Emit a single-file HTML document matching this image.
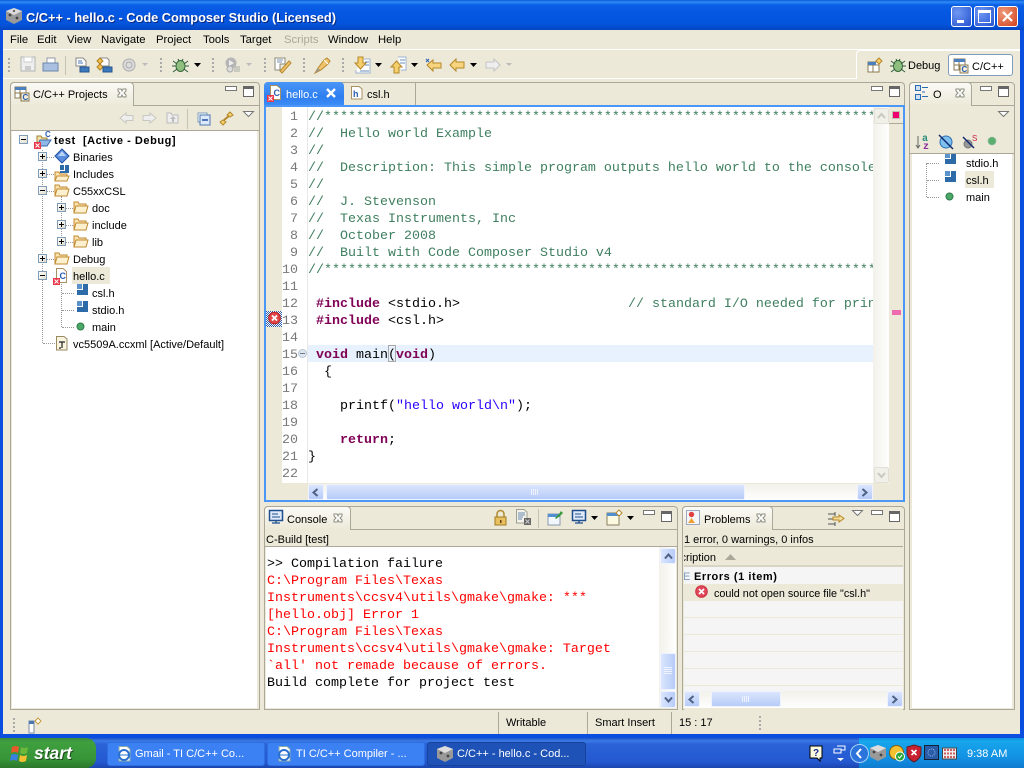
<!DOCTYPE html>
<html><head><meta charset="utf-8"><style>
html,body{margin:0;padding:0;width:1024px;height:768px;overflow:hidden;background:#ece9d8;font-family:"Liberation Sans",sans-serif;font-size:11px;color:#000}
.a{position:absolute;white-space:pre;margin-top:1px}
.b{position:absolute;box-sizing:border-box}
svg{position:absolute;overflow:visible}
.panel{position:absolute;box-sizing:border-box;border:1px solid #aca899;border-radius:4px 4px 0 0;background:#ece9d8}
.tab{position:absolute;box-sizing:border-box;background:#f4f2e8;border:1px solid #aca899;border-bottom:0;border-radius:4px 4px 0 0}
.m{position:absolute;top:0;height:20px;line-height:20px;font-size:11.3px}
.c{position:absolute;left:308px;font:13.33px/17px "Liberation Mono",monospace;white-space:pre;color:#000;margin-top:1px}
.g{color:#3f7f5f}.k{color:#7f0055;font-weight:bold}.s{color:#2a00ff}
.ln{position:absolute;left:282px;width:16px;text-align:right;font:13.33px/17px "Liberation Mono",monospace;color:#787878;margin-top:1px}
.con{position:absolute;left:267px;font:13.33px/17px "Liberation Mono",monospace;white-space:pre;margin-top:1px}
.r{color:#f00}
.min{position:absolute;width:10px;height:3px;border:1px solid #777;background:#fff}
.max{position:absolute;width:11px;height:11px;box-sizing:border-box;border:1px solid #666;border-top:3px solid #666;background:#fff}
.sb{position:absolute;box-sizing:border-box;background:linear-gradient(#dbe6fd,#b6cbf8);border:1px solid #eef3ff;border-radius:2px}
.sbv{position:absolute;box-sizing:border-box;background:linear-gradient(90deg,#dbe6fd,#b6cbf8);border:1px solid #eef3ff;border-radius:2px}
.pm{position:absolute;width:9px;height:9px;box-sizing:border-box;border:1px solid #7f9db9;background:linear-gradient(135deg,#fff,#e0dccb)}
.dl{position:absolute;border-left:1px dotted #999}
.dh{position:absolute;border-top:1px dotted #999}
.tb{position:absolute;top:742px;height:24px;box-sizing:border-box;border-radius:3px;color:#fff;line-height:23px;font-size:11px}
.grip{position:absolute;width:2px;border-left:2px dotted #aaa}
</style></head><body>

<!-- title bar -->
<div class="b" style="left:0;top:0;width:1024px;height:30px;background:linear-gradient(#0a5bd6 0,#2e8bf7 2px,#0a5fe6 5px,#0558e3 12px,#0454dc 24px,#0345c2 30px)"></div>
<div class="b" style="left:0;top:30px;width:3px;height:708px;background:#0a4ee0"></div>
<div class="b" style="left:1020px;top:30px;width:4px;height:708px;background:#0a4ee0"></div>
<div class="b" style="left:0;top:734px;width:1024px;height:4px;background:#0a4ee0"></div>
<svg style="left:6px;top:8px" width="18" height="16"><path d="M8 0L16 3V12L8 16L0 12V3Z" fill="#9a9a9a"/><path d="M8 0L16 3L8 7L0 3Z" fill="#dcdcdc"/><circle cx="4" cy="7" r="1.4" fill="#444"/><circle cx="11" cy="10" r="1.4" fill="#444"/><circle cx="8" cy="3" r="1.2" fill="#666"/></svg>
<div class="a" style="left:26px;top:9px;color:#fff;font-weight:bold;font-size:12.8px;text-shadow:1px 1px #0a2a80">C/C++ - hello.c - Code Composer Studio (Licensed)</div>
<!-- window buttons -->
<div class="b" style="left:951px;top:6px;width:21px;height:21px;border:1px solid #fff;border-radius:3px;background:radial-gradient(circle at 30% 30%,#6f98f2,#2452cf)"><div class="b" style="left:5px;top:13px;width:7px;height:3px;background:#fff"></div></div>
<div class="b" style="left:974px;top:6px;width:21px;height:21px;border:1px solid #fff;border-radius:3px;background:radial-gradient(circle at 30% 30%,#6f98f2,#2452cf)"><div class="b" style="left:3px;top:3px;width:13px;height:13px;border:1px solid #fff;border-top:3px solid #fff"></div></div>
<div class="b" style="left:997px;top:6px;width:21px;height:21px;border:1px solid #fff;border-radius:3px;background:radial-gradient(circle at 30% 30%,#ee9a7c,#d2421c)"><svg style="left:4px;top:4px" width="11" height="11"><path d="M1 1L10 10M10 1L1 10" stroke="#fff" stroke-width="2.2"/></svg></div>

<!-- menu -->
<div class="b" style="left:3px;top:30px;width:1017px;height:20px;background:#ece9d8">
<span class="m" style="left:7px">File</span><span class="m" style="left:34px">Edit</span><span class="m" style="left:64px">View</span><span class="m" style="left:98px">Navigate</span><span class="m" style="left:153px">Project</span><span class="m" style="left:200px">Tools</span><span class="m" style="left:237px">Target</span><span class="m" style="left:281px;color:#aca899">Scripts</span><span class="m" style="left:325px">Window</span><span class="m" style="left:375px">Help</span>
</div>
<div class="b" style="left:3px;top:49px;width:1017px;height:1px;background:#fff"></div>

<!-- toolbar -->
<div class="grip" style="left:8px;top:58px;height:14px"></div>
<svg style="left:20px;top:56px" width="16" height="16"><path d="M1 1H15V15H1Z" fill="#eee" stroke="#b5b5b5"/><path d="M4 1H12V6H4Z" fill="#fff" stroke="#ccc"/><path d="M5 10H11V15H5Z" fill="#ccc"/></svg>
<svg style="left:42px;top:57px" width="18" height="16"><path d="M5 1H13V6H5Z" fill="#fff" stroke="#99a"/><path d="M1 6H16V14H1Z" fill="#a9c0e0" stroke="#6b86ad"/></svg>
<div class="b" style="left:65px;top:56px;width:1px;height:19px;background:#c5c2b2"></div>
<svg style="left:74px;top:57px" width="17" height="17"><path d="M2 1H9L12 4V9H2Z" fill="#fff" stroke="#888"/><path d="M4 4H8M4 6H9" stroke="#4a78b4"/><path d="M6 10H15V15H6Z" fill="#3b79bd" stroke="#27558f"/></svg>
<svg style="left:96px;top:57px" width="17" height="17"><path d="M4 1H11L13 3V9H4Z" fill="#fff" stroke="#888"/><path d="M1 4L4 1L7 4L4 7Z" fill="#f0c050" stroke="#b08020"/><path d="M1 10L4 7L7 10L4 13Z" fill="#f0c050" stroke="#b08020"/><path d="M7 10H16V15H7Z" fill="#3b79bd" stroke="#27558f"/></svg>
<svg style="left:122px;top:58px" width="15" height="15"><circle cx="7" cy="7" r="6" fill="#ddd" stroke="#aaa"/><circle cx="7" cy="7" r="3" fill="none" stroke="#aaa"/></svg>
<svg style="left:142px;top:63px" width="6" height="3"><path d="M0 0H6L3 3Z" fill="#bbb"/></svg>
<div class="grip" style="left:160px;top:58px;height:14px"></div>
<svg style="left:172px;top:57px" width="17" height="16"><ellipse cx="8.500" cy="9" rx="4.500" ry="5.500" fill="#8fbf7f" stroke="#36683a"/><path d="M1 4L5 7M16 4L12 7M0 9H4M17 9H13M1 15L5 12M16 15L12 12M6 2L7 4M11 2L10 4" stroke="#2d5a3a"/></svg>
<svg style="left:194px;top:63px" width="7" height="4"><path d="M0 0H7L3.500 4Z" fill="#000"/></svg>
<div class="grip" style="left:212px;top:58px;height:14px"></div>
<svg style="left:224px;top:57px" width="17" height="16"><circle cx="7" cy="6" r="5.500" fill="#b5b5b5"/><path d="M5 3L10 6L5 9Z" fill="#eee"/><circle cx="6" cy="12" r="3" fill="#ddd" stroke="#aaa"/><path d="M10 10H16M10 12H16M10 14H16" stroke="#aaa"/></svg>
<svg style="left:246px;top:63px" width="6" height="3"><path d="M0 0H6L3 3Z" fill="#bbb"/></svg>
<div class="grip" style="left:264px;top:58px;height:14px"></div>
<svg style="left:274px;top:57px" width="18" height="17"><path d="M1 1H11V7H6V13H1Z" fill="#fff" stroke="#8a8a7a"/><path d="M3 3H9M3 5H8" stroke="#7a90b0"/><path d="M6 14L15 4L17 6L8 16Z" fill="#efc26c" stroke="#b98a2e"/></svg>
<div class="grip" style="left:303px;top:58px;height:14px"></div>
<svg style="left:314px;top:57px" width="17" height="17"><path d="M1 16L4 11L10 3L13 1L16 4L14 7L7 13L3 15Z" fill="#efc26c" stroke="#b98a2e"/><path d="M1 16L4 11L6 13Z" fill="#999"/><path d="M10 3L14 7" stroke="#fff"/></svg>
<div class="grip" style="left:342px;top:58px;height:14px"></div>
<svg style="left:354px;top:56px" width="17" height="18"><path d="M10 3H16V17H2V14" fill="#fff" stroke="#9db4d2"/><path d="M11 6H15M11 9H15M6 15H15" stroke="#6a8cb8"/><path d="M4 1H9V7H12L6.500 13L1 7H4Z" fill="#f5cf6b" stroke="#b5862a"/></svg>
<svg style="left:375px;top:63px" width="7" height="4"><path d="M0 0H7L3.500 4Z" fill="#000"/></svg>
<svg style="left:390px;top:56px" width="17" height="18"><path d="M8 1H16V14H11" fill="#fff" stroke="#9db4d2"/><path d="M10 4H15M10 7H15" stroke="#6a8cb8"/><path d="M4 17H9V11H12L6.500 5L1 11H4Z" fill="#f5cf6b" stroke="#b5862a"/></svg>
<svg style="left:411px;top:63px" width="7" height="4"><path d="M0 0H7L3.500 4Z" fill="#000"/></svg>
<svg style="left:425px;top:58px" width="17" height="14"><path d="M2 7L8 2V5H16V10H8V13Z" fill="#f7d57e" stroke="#b5862a"/><path d="M1 1L4 4M4 1L1 4" stroke="#2a5db0"/></svg>
<svg style="left:449px;top:58px" width="16" height="14"><path d="M1 7L7 1V4H15V10H7V13Z" fill="#f7d57e" stroke="#b5862a"/></svg>
<svg style="left:470px;top:63px" width="7" height="4"><path d="M0 0H7L3.500 4Z" fill="#000"/></svg>
<svg style="left:485px;top:58px" width="16" height="14"><path d="M15 7L9 1V4H1V10H9V13Z" fill="#eee" stroke="#c4c4c4"/></svg>
<svg style="left:506px;top:63px" width="6" height="3"><path d="M0 0H6L3 3Z" fill="#bbb"/></svg>

<!-- perspective bar -->
<div class="b" style="left:3px;top:78px;width:856px;height:1px;background:#fff"></div>
<div class="b" style="left:856px;top:50px;width:164px;height:29px;border-left:1px solid #fff;border-top:1px solid #fff;border-radius:4px 0 0 0;background:#ece9d8"></div>
<svg style="left:867px;top:58px" width="16" height="15"><path d="M1 4H12V14H1Z" fill="#fff" stroke="#8a7a50"/><path d="M1 7H12M6 7V14" stroke="#8a7a50"/><path d="M1 4H9V7H1Z" fill="#4a80c0"/><path d="M12 0L15 3L12 6L9 3Z" fill="#f5cf6b" stroke="#b5862a"/></svg>
<svg style="left:890px;top:57px" width="16" height="16"><ellipse cx="8" cy="9" rx="4.500" ry="5.500" fill="#8fbf7f" stroke="#36683a"/><path d="M1 4L5 7M15 4L11 7M0 9H4M16 9H12M1 15L5 12M15 15L11 12M6 2L7 4M10 2L9 4" stroke="#2d5a3a"/></svg>
<div class="a" style="left:908px;top:58px;line-height:14px">Debug</div>
<div class="b" style="left:948px;top:54px;width:65px;height:22px;background:#fff;border:1px solid #7f9db9;border-radius:3px"></div>
<svg style="left:953px;top:58px" width="16" height="16"><path d="M1 1H12V12H1Z" fill="#fff" stroke="#8a7a50"/><path d="M1 1H12V4H1Z" fill="#4a80c0"/><path d="M1 7H12M6 4V12" stroke="#8a7a50"/><path d="M7 7H15V15H7Z" fill="#f0ecd8" stroke="#8a7a50"/><text x="8.500" y="14" font-family="Liberation Sans" font-size="8" font-weight="bold" fill="#2a5db0">C</text></svg>
<div class="a" style="left:972px;top:59px;line-height:14px">C/C++</div>

<!-- LEFT: projects -->
<div class="panel" style="left:10px;top:82px;width:250px;height:628px"></div>
<div class="tab" style="left:10px;top:82px;width:124px;height:24px;background:linear-gradient(#fbfaf6,#ece9d8)"></div>
<div class="b" style="left:134px;top:105px;width:126px;height:1px;background:#aca899"></div>
<svg style="left:14px;top:86px" width="16" height="16"><path d="M1 1H12V12H1Z" fill="#fff" stroke="#8a7a50"/><path d="M1 1H12V4H1Z" fill="#4a80c0"/><path d="M1 7H12M6 4V12" stroke="#8a7a50"/><path d="M7 7H15V15H7Z" fill="#f0ecd8" stroke="#8a7a50"/><text x="8.500" y="14" font-family="Liberation Sans" font-size="8" font-weight="bold" fill="#2a5db0">C</text></svg>
<div class="a" style="left:33px;top:87px;line-height:14px">C/C++ Projects</div>
<svg style="left:117px;top:88px" width="10" height="10"><path d="M1 1L4 1L5 3L6 1L9 1L9 3L7 5L9 7L9 9L6 9L5 7L4 9L1 9L1 7L3 5L1 3Z" fill="#fff" stroke="#8d8d80"/></svg>
<div class="min" style="left:225px;top:86px"></div><div class="max" style="left:243px;top:86px"></div>
<svg style="left:119px;top:112px" width="15" height="12"><path d="M1 6L7 1V3.500H14V8.500H7V11Z" fill="#eee" stroke="#c8c8c0"/></svg>
<svg style="left:142px;top:112px" width="15" height="12"><path d="M14 6L8 1V3.500H1V8.500H8V11Z" fill="#eee" stroke="#c8c8c0"/></svg>
<svg style="left:165px;top:110px" width="15" height="15"><path d="M2 3H6L7 5H13V13H2Z" fill="#eee" stroke="#bbb"/><path d="M5 9L8 6L11 9H9V12H7V9Z" fill="#bbb"/></svg>
<div class="b" style="left:187px;top:109px;width:1px;height:20px;background:#c5c2b2"></div>
<svg style="left:197px;top:112px" width="14" height="14"><path d="M1 1H10V10H1Z" fill="#fff" stroke="#7f9db9"/><path d="M3 3H13V13H3Z" fill="#dde8f8" stroke="#4a78b4"/><path d="M5 8H11" stroke="#1f4f9f" stroke-width="1.500"/></svg>
<svg style="left:219px;top:111px" width="15" height="15"><path d="M1 11L4 9L7 11L4 14ZM8 4L11 1L14 4L11 6Z" fill="#f5cf6b" stroke="#b5862a"/><path d="M5 9L10 5" stroke="#b5862a" stroke-width="2"/></svg>
<svg style="left:243px;top:111px" width="11" height="6"><path d="M0.500 0.500H10.500L5.500 5.500Z" fill="#fff" stroke="#777"/></svg>
<div class="b" style="left:11px;top:130px;width:248px;height:1px;background:#aca899"></div>
<div class="b" style="left:12px;top:131px;width:245px;height:577px;background:#fff"></div>

<!-- tree lines -->
<div class="dl" style="left:42px;top:150px;height:193px"></div>
<div class="dl" style="left:61px;top:196px;height:46px"></div>
<div class="dl" style="left:61px;top:282px;height:45px"></div>
<div class="dh" style="left:43px;top:343px;width:12px"></div>
<div class="dh" style="left:62px;top:293px;width:12px"></div>
<div class="dh" style="left:62px;top:310px;width:12px"></div>
<div class="dh" style="left:62px;top:327px;width:12px"></div>
<div class="dh" style="left:47px;top:157px;width:7px"></div>
<div class="dh" style="left:47px;top:174px;width:7px"></div>
<div class="dh" style="left:47px;top:191px;width:7px"></div>
<div class="dh" style="left:47px;top:259px;width:7px"></div>
<div class="dh" style="left:66px;top:208px;width:7px"></div>
<div class="dh" style="left:66px;top:225px;width:7px"></div>
<div class="dh" style="left:66px;top:242px;width:7px"></div>
<div class="pm" style="left:19px;top:135px"></div><div class="b" style="left:21px;top:139px;width:5px;height:1px;background:#000"></div>
<div class="pm" style="left:38px;top:152px"></div><div class="b" style="left:40px;top:156px;width:5px;height:1px;background:#000"></div><div class="b" style="left:42px;top:154px;width:1px;height:5px;background:#000"></div>
<div class="pm" style="left:38px;top:169px"></div><div class="b" style="left:40px;top:173px;width:5px;height:1px;background:#000"></div><div class="b" style="left:42px;top:171px;width:1px;height:5px;background:#000"></div>
<div class="pm" style="left:38px;top:186px"></div><div class="b" style="left:40px;top:190px;width:5px;height:1px;background:#000"></div>
<div class="pm" style="left:57px;top:203px"></div><div class="b" style="left:59px;top:207px;width:5px;height:1px;background:#000"></div><div class="b" style="left:61px;top:205px;width:1px;height:5px;background:#000"></div>
<div class="pm" style="left:57px;top:220px"></div><div class="b" style="left:59px;top:224px;width:5px;height:1px;background:#000"></div><div class="b" style="left:61px;top:222px;width:1px;height:5px;background:#000"></div>
<div class="pm" style="left:57px;top:237px"></div><div class="b" style="left:59px;top:241px;width:5px;height:1px;background:#000"></div><div class="b" style="left:61px;top:239px;width:1px;height:5px;background:#000"></div>
<div class="pm" style="left:38px;top:254px"></div><div class="b" style="left:40px;top:258px;width:5px;height:1px;background:#000"></div><div class="b" style="left:42px;top:256px;width:1px;height:5px;background:#000"></div>
<div class="pm" style="left:38px;top:271px"></div><div class="b" style="left:40px;top:275px;width:5px;height:1px;background:#000"></div>

<!-- tree icons -->
<svg style="left:34px;top:131px" width="17" height="18"><path d="M3 5H7L8 7H13V15H3Z" fill="#f5e2a8" stroke="#a08030"/><path d="M3 15L6 9H17L13 15Z" fill="#8fb8e8" stroke="#3a6aa8"/><rect x="0" y="11" width="7" height="7" fill="#e8384a"/><path d="M1.500 12.500L5.500 16.500M5.500 12.500L1.500 16.500" stroke="#fff"/><text x="11" y="6" font-family="Liberation Sans" font-size="8" font-weight="bold" fill="#2a5db0">C</text></svg>
<svg style="left:55px;top:149px" width="14" height="14"><path d="M7 0L14 7L7 14L0 7Z" fill="#5a8fe0" stroke="#1f4f9f"/><path d="M7 2L11 7H3Z" fill="#b8d2f8"/></svg>
<svg style="left:54px;top:165px" width="16" height="17"><path d="M6 0H10V5H6ZM11 0H15V8H6V6H11Z" fill="#2d6aa8"/><path d="M1 7H5L6 9H13V16H1Z" fill="#fbe3b0" stroke="#c08a30"/><path d="M1 16L3 11H15L13 16Z" fill="#fdf0cf" stroke="#c08a30"/></svg>
<svg style="left:54px;top:184px" width="16" height="13"><path d="M1 1H5L6 3H13V12H1Z" fill="#fbe3b0" stroke="#c08a30"/><path d="M1 12L3 5H15L13 12Z" fill="#fdf0cf" stroke="#c08a30"/></svg>
<svg style="left:73px;top:201px" width="16" height="13"><path d="M1 1H5L6 3H13V12H1Z" fill="#fbe3b0" stroke="#c08a30"/><path d="M1 12L3 5H15L13 12Z" fill="#fdf0cf" stroke="#c08a30"/></svg>
<svg style="left:73px;top:218px" width="16" height="13"><path d="M1 1H5L6 3H13V12H1Z" fill="#fbe3b0" stroke="#c08a30"/><path d="M1 12L3 5H15L13 12Z" fill="#fdf0cf" stroke="#c08a30"/></svg>
<svg style="left:73px;top:235px" width="16" height="13"><path d="M1 1H5L6 3H13V12H1Z" fill="#fbe3b0" stroke="#c08a30"/><path d="M1 12L3 5H15L13 12Z" fill="#fdf0cf" stroke="#c08a30"/></svg>
<svg style="left:54px;top:252px" width="16" height="13"><path d="M1 1H5L6 3H13V12H1Z" fill="#fbe3b0" stroke="#c08a30"/><path d="M1 12L3 5H15L13 12Z" fill="#fdf0cf" stroke="#c08a30"/></svg>
<svg style="left:53px;top:268px" width="15" height="17"><path d="M3.500 0.500H10L13.500 3.500V14.500H3.500Z" fill="#fff" stroke="#a89060"/><text x="6.500" y="11" font-family="Liberation Sans" font-size="9" font-weight="bold" fill="#2a5db0">C</text><rect x="0" y="10" width="7" height="7" fill="#e8384a"/><path d="M1.500 11.500L5.500 15.500M5.500 11.500L1.500 15.500" stroke="#fff"/></svg>
<svg style="left:77px;top:284px" width="11" height="11"><path d="M0 0H5V5H0Z" fill="#5a92cc"/><path d="M6 0H11V11H0V6H6Z" fill="#2d6aa8"/></svg>
<svg style="left:77px;top:301px" width="11" height="11"><path d="M0 0H5V5H0Z" fill="#5a92cc"/><path d="M6 0H11V11H0V6H6Z" fill="#2d6aa8"/></svg>
<svg style="left:76px;top:322px" width="9" height="9"><circle cx="4.500" cy="4.500" r="3.500" fill="#4ca866" stroke="#2d7a4a"/></svg>
<svg style="left:56px;top:336px" width="12" height="15"><path d="M0.500 0.500H8L11 3V14H0.500Z" fill="#f8f4e0" stroke="#9a8a60"/><path d="M3 6H9M6 6V12M3 12H5" stroke="#222" stroke-width="1.200"/></svg>

<!-- tree text -->
<div class="a" style="left:54px;top:133px;font-weight:bold;line-height:14px;letter-spacing:.55px">test  [Active - Debug]</div>
<div class="a" style="left:73px;top:150px;line-height:14px">Binaries</div>
<div class="a" style="left:73px;top:167px;line-height:14px">Includes</div>
<div class="a" style="left:73px;top:184px;line-height:14px">C55xxCSL</div>
<div class="a" style="left:92px;top:201px;line-height:14px">doc</div>
<div class="a" style="left:92px;top:218px;line-height:14px">include</div>
<div class="a" style="left:92px;top:235px;line-height:14px">lib</div>
<div class="a" style="left:73px;top:252px;line-height:14px">Debug</div>
<div class="b" style="left:72px;top:267px;width:38px;height:17px;background:#ece9d8"></div>
<div class="a" style="left:73px;top:269px;line-height:14px">hello.c</div>
<div class="a" style="left:92px;top:286px;line-height:14px">csl.h</div>
<div class="a" style="left:92px;top:303px;line-height:14px">stdio.h</div>
<div class="a" style="left:92px;top:320px;line-height:14px">main</div>
<div class="a" style="left:73px;top:337px;line-height:14px">vc5509A.ccxml [Active/Default]</div>

<!-- EDITOR -->
<div class="panel" style="left:264px;top:82px;width:641px;height:24px;border-bottom:0"></div>
<div class="b" style="left:264px;top:82px;width:80px;height:25px;background:linear-gradient(#4a96f8,#2d7ef0 60%,#3f8ff8);border-radius:4px 4px 0 0"></div>
<div class="b" style="left:344px;top:82px;width:72px;height:24px;background:#ece9d8;border-right:1px solid #aca899;border-top:1px solid #aca899"></div>
<svg style="left:267px;top:85px" width="15" height="17"><path d="M3.500 0.500H10L13.500 3.500V14.500H3.500Z" fill="#fff" stroke="#a89060"/><text x="6.500" y="11" font-family="Liberation Sans" font-size="9" font-weight="bold" fill="#2a5db0">C</text><rect x="0" y="10" width="7" height="7" fill="#e8384a"/><path d="M1.500 11.500L5.500 15.500M5.500 11.500L1.500 15.500" stroke="#fff"/></svg>
<div class="a" style="left:286px;top:87px;color:#fff;line-height:14px">hello.c</div>
<svg style="left:326px;top:88px" width="10" height="10"><path d="M1 1L9 9M9 1L1 9" stroke="#fff" stroke-width="2.400"/></svg>
<svg style="left:351px;top:86px" width="12" height="14"><path d="M0.500 0.500H8L11 3V13H0.500Z" fill="#fff" stroke="#a89060"/><text x="2" y="11" font-family="Liberation Sans" font-size="9" font-weight="bold" fill="#2a5db0">h</text></svg>
<div class="a" style="left:367px;top:87px;line-height:14px">csl.h</div>
<div class="min" style="left:871px;top:86px"></div><div class="max" style="left:889px;top:86px"></div>

<div class="b" style="left:264px;top:105px;width:641px;height:397px;border:2px solid #4b97f8;background:#fff"></div>
<div class="b" style="left:266px;top:107px;width:16px;height:376px;background:#ece9d8"></div>
<div class="b" style="left:307px;top:107px;width:1px;height:376px;background:#e8e8e8"></div>
<div class="b" style="left:266px;top:483px;width:637px;height:17px;background:#ece9d8"></div>
<div class="b" style="left:308px;top:345px;width:565px;height:17px;background:#e8f2fe"></div>
<div class="b" style="left:388px;top:345px;width:8px;height:17px;border:1px solid #aaa"></div>
<!-- overview ruler -->
<div class="b" style="left:889px;top:107px;width:14px;height:376px;background:#ece9d8"></div>
<div class="b" style="left:889px;top:123px;width:14px;height:1px;background:#aca899"></div>
<div class="b" style="left:892px;top:111px;width:8px;height:8px;background:#f0006e;border:1px solid #c0c0b0"></div>
<div class="b" style="left:892px;top:310px;width:9px;height:5px;background:#f06ab0"></div>
<!-- v scroll -->
<div class="b" style="left:873px;top:107px;width:16px;height:376px;background:linear-gradient(90deg,#f2f1ea,#fefefe)"></div>
<div class="b" style="left:874px;top:108px;width:15px;height:16px;background:#f0efe8;border:1px solid #e0e0d8;border-radius:2px"></div>
<svg style="left:877px;top:113px" width="9" height="6"><path d="M1 5L4.500 1L8 5" fill="none" stroke="#c8c8c0" stroke-width="2"/></svg>
<div class="b" style="left:874px;top:467px;width:15px;height:16px;background:#f0efe8;border:1px solid #e0e0d8;border-radius:2px"></div>
<svg style="left:877px;top:472px" width="9" height="6"><path d="M1 1L4.500 5L8 1" fill="none" stroke="#c8c8c0" stroke-width="2"/></svg>
<!-- h scroll -->
<div class="b" style="left:308px;top:484px;width:565px;height:16px;background:linear-gradient(#f2f1ea,#fefefe)"></div>
<div class="sb" style="left:308px;top:484px;width:16px;height:16px"></div>
<svg style="left:312px;top:488px" width="7" height="9"><path d="M5.500 1L1.500 4.500L5.500 8" fill="none" stroke="#4d6185" stroke-width="2"/></svg>
<div class="sb" style="left:326px;top:484px;width:419px;height:16px"></div>
<svg style="left:531px;top:489px" width="8" height="6"><path d="M0.500 0V6M2.500 0V6M4.500 0V6M6.500 0V6" stroke="#eef3ff"/></svg>
<div class="sb" style="left:857px;top:484px;width:16px;height:16px"></div>
<svg style="left:861px;top:488px" width="7" height="9"><path d="M1.500 1L5.500 4.500L1.500 8" fill="none" stroke="#4d6185" stroke-width="2"/></svg>

<!-- line numbers -->
<div class="ln" style="top:108px">1</div><div class="ln" style="top:125px">2</div><div class="ln" style="top:142px">3</div><div class="ln" style="top:159px">4</div><div class="ln" style="top:176px">5</div><div class="ln" style="top:193px">6</div><div class="ln" style="top:210px">7</div><div class="ln" style="top:227px">8</div><div class="ln" style="top:244px">9</div><div class="ln" style="top:261px">10</div><div class="ln" style="top:278px">11</div><div class="ln" style="top:295px">12</div><div class="ln" style="top:312px">13</div><div class="ln" style="top:329px">14</div><div class="ln" style="top:346px">15</div><div class="ln" style="top:363px">16</div><div class="ln" style="top:380px">17</div><div class="ln" style="top:397px">18</div><div class="ln" style="top:414px">19</div><div class="ln" style="top:431px">20</div><div class="ln" style="top:448px">21</div><div class="ln" style="top:465px">22</div>
<svg style="left:298px;top:349px" width="9" height="9"><circle cx="4.500" cy="4.500" r="4" fill="#dfe6ee" stroke="#b8c8d8"/><path d="M2 4.500H7" stroke="#6a7a8a"/></svg>
<svg style="left:266px;top:311px" width="16" height="16"><defs><pattern id="ht" width="2" height="2" patternUnits="userSpaceOnUse"><rect width="2" height="2" fill="#fff"/><rect width="1" height="1" fill="#2a5ca8"/><rect x="1" y="1" width="1" height="1" fill="#2a5ca8"/></pattern></defs><rect width="16" height="16" fill="url(#ht)"/><circle cx="8.500" cy="7" r="5.800" fill="#e04848" stroke="#c02020"/><path d="M6 4.500L11 9.500M11 4.500L6 9.500" stroke="#fff" stroke-width="1.800"/></svg>

<!-- code -->
<div style="position:absolute;left:308px;top:107px;width:565px;height:376px;overflow:hidden">
<div class="c g" style="left:0;top:1px">//*********************************************************************************</div>
<div class="c g" style="left:0;top:18px">//  Hello world Example</div>
<div class="c g" style="left:0;top:35px">//</div>
<div class="c g" style="left:0;top:52px">//  Description: This simple program outputs hello world to the console</div>
<div class="c g" style="left:0;top:69px">//</div>
<div class="c g" style="left:0;top:86px">//  J. Stevenson</div>
<div class="c g" style="left:0;top:103px">//  Texas Instruments, Inc</div>
<div class="c g" style="left:0;top:120px">//  October 2008</div>
<div class="c g" style="left:0;top:137px">//  Built with Code Composer Studio v4</div>
<div class="c g" style="left:0;top:154px">//*********************************************************************************</div>
<div class="c" style="left:0;top:188px"> <span class="k">#include</span> &lt;stdio.h&gt;                     <span class="g">// standard I/O needed for printf</span></div>
<div class="c" style="left:0;top:205px"> <span class="k">#include</span> &lt;csl.h&gt;</div>
<div class="c" style="left:0;top:239px"> <span class="k">void</span> main(<span class="k">void</span>)</div>
<div class="c" style="left:0;top:256px">  {</div>
<div class="c" style="left:0;top:290px">    printf(<span class="s">"hello world\n"</span>);</div>
<div class="c" style="left:0;top:324px">    <span class="k">return</span>;</div>
<div class="c" style="left:0;top:341px">}</div>
</div>

<!-- OUTLINE -->
<div class="panel" style="left:909px;top:82px;width:106px;height:628px"></div>
<div class="tab" style="left:909px;top:82px;width:63px;height:24px;background:linear-gradient(#fbfaf6,#ece9d8)"></div>
<div class="b" style="left:972px;top:105px;width:43px;height:1px;background:#aca899"></div>
<svg style="left:915px;top:85px" width="14" height="15"><path d="M0.500 0.500H5.500V5.500H0.500ZM0.500 9.500H5.500V14.500H0.500Z" fill="#cfe0f5" stroke="#2a6ab0"/><path d="M7 2.500H13M7 11.500H13M7 7H10" stroke="#2a6ab0"/></svg>
<div class="a" style="left:933px;top:87px;line-height:14px">O</div>
<svg style="left:955px;top:88px" width="10" height="10"><path d="M1 1L4 1L5 3L6 1L9 1L9 3L7 5L9 7L9 9L6 9L5 7L4 9L1 9L1 7L3 5L1 3Z" fill="#fff" stroke="#8d8d80"/></svg>
<div class="min" style="left:980px;top:86px"></div><div class="max" style="left:998px;top:86px"></div>
<svg style="left:998px;top:111px" width="11" height="6"><path d="M0.500 0.500H10.500L5.500 5.500Z" fill="#fff" stroke="#777"/></svg>
<svg style="left:915px;top:133px" width="18" height="17"><path d="M3 3V15M1 12L3 15L5 12" fill="none" stroke="#666"/><text x="7" y="8" font-family="Liberation Mono" font-size="10" font-weight="bold" fill="#2d8a7a">a</text><text x="8" y="16" font-family="Liberation Mono" font-size="10" font-weight="bold" fill="#8a2d9a">z</text></svg>
<svg style="left:938px;top:134px" width="16" height="16"><circle cx="8" cy="8" r="6" fill="#80c0f0" stroke="#2a70b0"/><path d="M1 1L15 15" stroke="#102a70" stroke-width="1.500"/></svg>
<svg style="left:962px;top:134px" width="16" height="16"><circle cx="6" cy="10" r="4" fill="#999" stroke="#777"/><path d="M1 3L12 14" stroke="#102a70" stroke-width="1.500"/><text x="10" y="7" font-family="Liberation Sans" font-size="8" fill="#d02040">S</text></svg>
<svg style="left:987px;top:136px" width="10" height="10"><circle cx="5" cy="5" r="3.800" fill="#5cae70" stroke="#7ab88a"/></svg>
<div class="b" style="left:910px;top:153px;width:104px;height:1px;background:#aca899"></div>
<div class="b" style="left:912px;top:154px;width:100px;height:554px;background:#fff"></div>
<div class="dl" style="left:926px;top:163px;height:34px"></div>
<div class="dh" style="left:927px;top:163px;width:12px"></div>
<div class="dh" style="left:927px;top:180px;width:12px"></div>
<div class="dh" style="left:927px;top:197px;width:12px"></div>
<svg style="left:945px;top:154px" width="11" height="10"><path d="M0 0H5V4H0Z" fill="#5a92cc"/><path d="M6 0H11V10H0V5H6Z" fill="#2d6aa8"/></svg>
<svg style="left:945px;top:171px" width="11" height="11"><path d="M0 0H5V5H0Z" fill="#5a92cc"/><path d="M6 0H11V11H0V6H6Z" fill="#2d6aa8"/></svg>
<svg style="left:945px;top:192px" width="9" height="9"><circle cx="4.500" cy="4.500" r="3.500" fill="#4ca866" stroke="#2d7a4a"/></svg>
<div class="b" style="left:965px;top:171px;width:29px;height:17px;background:#ece9d8"></div>
<div class="a" style="left:966px;top:156px;line-height:14px">stdio.h</div>
<div class="a" style="left:966px;top:173px;line-height:14px">csl.h</div>
<div class="a" style="left:966px;top:190px;line-height:14px">main</div>

<!-- CONSOLE -->
<div class="panel" style="left:264px;top:506px;width:414px;height:204px"></div>
<div class="tab" style="left:264px;top:506px;width:87px;height:24px;background:linear-gradient(#fbfaf6,#ece9d8)"></div>
<div class="b" style="left:351px;top:529px;width:327px;height:1px;background:#aca899"></div>
<svg style="left:269px;top:510px" width="14" height="14"><path d="M0.500 0.500H13.500V10.500H0.500Z" fill="#dfe9f8" stroke="#1f4f90" stroke-width="1.500"/><path d="M3 4H9M3 7H11" stroke="#1f4f90"/><path d="M3 13H11M7 11V13" stroke="#1f4f90" stroke-width="1.300"/></svg>
<div class="a" style="left:287px;top:512px;line-height:14px">Console</div>
<svg style="left:333px;top:513px" width="10" height="10"><path d="M1 1L4 1L5 3L6 1L9 1L9 3L7 5L9 7L9 9L6 9L5 7L4 9L1 9L1 7L3 5L1 3Z" fill="#fff" stroke="#8d8d80"/></svg>
<svg style="left:494px;top:510px" width="13" height="16"><path d="M3 7V4A3.500 3.500 0 0 1 10 4V7" fill="none" stroke="#b08a30" stroke-width="1.500"/><rect x="1" y="7" width="11" height="8" fill="#e8c060" stroke="#a07a20"/><rect x="6" y="10" width="1.500" height="3" fill="#604010"/></svg>
<svg style="left:516px;top:509px" width="16" height="17"><path d="M0.500 0.500H8L11 3V14H0.500Z" fill="#f2f2ea" stroke="#a0a090"/><path d="M2 4H9M2 6H9M2 8H7M2 10H6" stroke="#6a8ab0"/><path d="M8 9H15V16H8Z" fill="#666"/><path d="M9.500 10.500L13.500 14.500M13.500 10.500L9.500 14.500" stroke="#ccc"/></svg>
<div class="b" style="left:538px;top:509px;width:1px;height:19px;background:#c5c2b2"></div>
<svg style="left:547px;top:510px" width="16" height="16"><path d="M1 4H13V15H1Z" fill="#f2f7fd" stroke="#8a9ab0"/><path d="M1 4H13V7H1Z" fill="#5090d0"/><path d="M8 8L12 4L14 1L16 3L13 6L9 9Z" fill="#3a9a3a"/></svg>
<svg style="left:572px;top:510px" width="14" height="14"><path d="M0.500 0.500H13.500V10.500H0.500Z" fill="#dfe9f8" stroke="#1f4f90" stroke-width="1.500"/><path d="M3 4H9M3 7H11" stroke="#1f4f90"/><path d="M3 13H11M7 11V13" stroke="#1f4f90" stroke-width="1.300"/></svg>
<svg style="left:591px;top:516px" width="7" height="4"><path d="M0 0H7L3.500 4Z" fill="#000"/></svg>
<svg style="left:606px;top:510px" width="17" height="16"><path d="M1 3H13V15H1Z" fill="#fdf8e0" stroke="#8a8060"/><path d="M1 3H13V6H1Z" fill="#5090d0"/><path d="M13 0L16 3L13 6L10 3Z" fill="#fff" stroke="#b5862a"/></svg>
<svg style="left:627px;top:516px" width="7" height="4"><path d="M0 0H7L3.500 4Z" fill="#000"/></svg>
<div class="min" style="left:643px;top:510px"></div><div class="max" style="left:661px;top:511px"></div>
<div class="a" style="left:266px;top:532px;line-height:14px">C-Build [test]</div>
<div class="b" style="left:265px;top:546px;width:412px;height:1px;background:#aca899"></div>
<div class="b" style="left:266px;top:547px;width:393px;height:161px;background:#fff"></div>
<div class="con" style="top:555px">&gt;&gt; Compilation failure</div>
<div class="con r" style="top:572px">C:\Program Files\Texas</div>
<div class="con r" style="top:589px">Instruments\ccsv4\utils\gmake\gmake: ***</div>
<div class="con r" style="top:606px">[hello.obj] Error 1</div>
<div class="con r" style="top:623px">C:\Program Files\Texas</div>
<div class="con r" style="top:640px">Instruments\ccsv4\utils\gmake\gmake: Target</div>
<div class="con r" style="top:657px">`all' not remade because of errors.</div>
<div class="con" style="top:674px">Build complete for project test</div>
<!-- console scroll -->
<div class="b" style="left:659px;top:547px;width:17px;height:161px;background:linear-gradient(90deg,#f2f1ea,#fefefe)"></div>
<div class="sbv" style="left:660px;top:548px;width:16px;height:16px"></div>
<svg style="left:664px;top:553px" width="9" height="7"><path d="M1 5.500L4.500 1.500L8 5.500" fill="none" stroke="#4d6185" stroke-width="2"/></svg>
<div class="sbv" style="left:660px;top:653px;width:16px;height:37px"></div>
<svg style="left:664px;top:667px" width="8" height="9"><path d="M0 .5H8M0 2.500H8M0 4.500H8M0 6.500H8" stroke="#eef3ff"/></svg>
<div class="sbv" style="left:660px;top:691px;width:16px;height:17px"></div>
<svg style="left:664px;top:696px" width="9" height="7"><path d="M1 1.500L4.500 5.500L8 1.500" fill="none" stroke="#4d6185" stroke-width="2"/></svg>

<!-- PROBLEMS -->
<div class="panel" style="left:682px;top:506px;width:223px;height:204px"></div>
<div class="tab" style="left:682px;top:506px;width:91px;height:24px;background:linear-gradient(#fbfaf6,#ece9d8)"></div>
<div class="b" style="left:773px;top:529px;width:132px;height:1px;background:#aca899"></div>
<svg style="left:686px;top:510px" width="14" height="15"><path d="M0.500 0.500H13.500V14.500H0.500Z" fill="#f4f6fa" stroke="#9aa8c0"/><circle cx="5.500" cy="4.500" r="2.700" fill="#e04040"/><path d="M5.500 8L9 13H2Z" fill="#f0a030"/></svg>
<div class="a" style="left:704px;top:512px;line-height:14px">Problems</div>
<svg style="left:756px;top:513px" width="10" height="10"><path d="M1 1L4 1L5 3L6 1L9 1L9 3L7 5L9 7L9 9L6 9L5 7L4 9L1 9L1 7L3 5L1 3Z" fill="#fff" stroke="#8d8d80"/></svg>
<svg style="left:828px;top:511px" width="17" height="15"><path d="M0 3H7M0 8H5M0 13H7M7 1V5M7 11V15" stroke="#555" stroke-width="1"/><path d="M5 6H11V4L16 7.500L11 11V9H5Z" fill="#f5e09a" stroke="#b5862a"/></svg>
<svg style="left:852px;top:510px" width="11" height="6"><path d="M0.500 0.500H10.500L5.500 5.500Z" fill="#fff" stroke="#777"/></svg>
<div class="min" style="left:871px;top:510px"></div><div class="max" style="left:889px;top:511px"></div>
<div class="a" style="left:684px;top:532px;line-height:14px">1 error, 0 warnings, 0 infos</div>
<div class="b" style="left:684px;top:546px;width:219px;height:1px;background:#aca899"></div>
<div class="b" style="left:684px;top:547px;width:219px;height:163px;overflow:hidden;background:#ece9d8">
<div class="a" style="left:-23px;top:3px;line-height:14px">Description</div>
<svg style="left:41px;top:7px" width="11" height="6"><path d="M0 6L5.500 0L11 6Z" fill="#aca899"/></svg>
<div class="b" style="left:0;top:18px;width:219px;height:2px;background:#d8d5c4"></div>
<div class="b" style="left:0;top:20px;width:219px;height:17px;background:#f5f5f5"></div>
<div class="a" style="left:-1px;top:22px;line-height:14px;color:#7a9ac0">E</div>
<div class="a" style="left:10px;top:22px;line-height:14px;font-weight:bold;letter-spacing:.55px">Errors (1 item)</div>
<div class="b" style="left:0;top:37px;width:219px;height:17px;background:#ece9d8"></div>
<div class="a" style="left:30px;top:39px;line-height:14px;font-size:10.8px">could not open source file "csl.h"</div>
<svg style="left:11px;top:38px" width="13" height="13"><circle cx="6.500" cy="6.500" r="5.800" fill="#e04858" stroke="#c83040"/><path d="M4 4L9 9M9 4L4 9" stroke="#fff" stroke-width="1.700"/></svg>
<div class="b" style="left:0;top:54px;width:219px;height:90px;background:#f5f5f5"></div>
<div class="b" style="left:0;top:70px;width:219px;height:1px;background:#ece9d8"></div>
<div class="b" style="left:0;top:87px;width:219px;height:1px;background:#ece9d8"></div>
<div class="b" style="left:0;top:104px;width:219px;height:1px;background:#ece9d8"></div>
<div class="b" style="left:0;top:121px;width:219px;height:1px;background:#ece9d8"></div>
<div class="b" style="left:0;top:138px;width:219px;height:1px;background:#ece9d8"></div>
<div class="b" style="left:0;top:144px;width:219px;height:17px;background:linear-gradient(#f2f1ea,#fefefe)"></div>
</div>
<div class="sb" style="left:684px;top:691px;width:16px;height:16px"></div>
<svg style="left:688px;top:695px" width="7" height="9"><path d="M5.500 1L1.500 4.500L5.500 8" fill="none" stroke="#4d6185" stroke-width="2"/></svg>
<div class="sb" style="left:711px;top:691px;width:70px;height:16px"></div>
<svg style="left:742px;top:696px" width="8" height="6"><path d="M0.500 0V6M2.500 0V6M4.500 0V6M6.500 0V6" stroke="#eef3ff"/></svg>
<div class="sb" style="left:887px;top:691px;width:16px;height:16px"></div>
<svg style="left:891px;top:695px" width="7" height="9"><path d="M1.500 1L5.500 4.500L1.500 8" fill="none" stroke="#4d6185" stroke-width="2"/></svg>

<!-- STATUS BAR -->
<div class="grip" style="left:13px;top:718px;height:14px"></div>
<svg style="left:28px;top:718px" width="16" height="16"><rect x="1" y="3" width="5" height="12" fill="#fff" stroke="#7a8aa8"/><rect x="1" y="3" width="5" height="3" fill="#4a78b4"/><path d="M10 0L13 3L10 6L7 3Z" fill="#fff" stroke="#c89a3a"/></svg>
<div class="b" style="left:498px;top:712px;width:1px;height:22px;background:#aca899"></div>
<div class="b" style="left:587px;top:712px;width:1px;height:22px;background:#aca899"></div>
<div class="b" style="left:671px;top:712px;width:1px;height:22px;background:#aca899"></div>
<div class="a" style="left:506px;top:715px;line-height:14px">Writable</div>
<div class="a" style="left:595px;top:715px;line-height:14px">Smart Insert</div>
<div class="a" style="left:679px;top:715px;line-height:14px">15 : 17</div>
<div class="grip" style="left:759px;top:716px;height:14px"></div>

<!-- TASKBAR -->
<div class="b" style="left:0;top:738px;width:1024px;height:30px;background:linear-gradient(#1f56c8 0,#3b7ae6 3px,#2a63d8 6px,#2458d0 24px,#1c45ae 30px)"></div>
<div class="b" style="left:0;top:738px;width:96px;height:30px;background:linear-gradient(#3c8a3c,#3fa03f 15%,#379437 70%,#2c772c);border-radius:0 10px 10px 0"></div>
<svg style="left:10px;top:745px" width="20" height="18"><path d="M2 2Q6 0 9 2L8 8Q5 6 1 8Z" fill="#e85a2a"/><path d="M11 2Q14 4 18 2L17 8Q13 10 10 8Z" fill="#6cb83a"/><path d="M1 10Q4 8 8 10L7 16Q4 14 0 16Z" fill="#3a80e0"/><path d="M10 10Q13 12 17 10L16 16Q12 18 9 16Z" fill="#f5c030"/></svg>
<div class="a" style="left:34px;top:742px;color:#fff;font-size:17.500px;font-weight:bold;font-style:italic;line-height:20px;text-shadow:1px 1px #1c4a1c">start</div>

<div class="tb" style="left:107px;width:158px;background:#3c81f3;border:1px solid #2f6ee0">
<svg style="left:8px;top:3px" width="16" height="16"><path d="M3 0.500H11L14 3V15H3Z" fill="#fff" stroke="#8aa"/><circle cx="8" cy="9" r="5" fill="none" stroke="#2a70d0" stroke-width="2"/><path d="M3 9H13" stroke="#2a70d0"/></svg>
<span style="position:absolute;left:27px">Gmail - TI C/C++ Co...</span></div>
<div class="tb" style="left:267px;width:158px;background:#3c81f3;border:1px solid #2f6ee0">
<svg style="left:8px;top:3px" width="16" height="16"><path d="M3 0.500H11L14 3V15H3Z" fill="#fff" stroke="#8aa"/><circle cx="8" cy="9" r="5" fill="none" stroke="#2a70d0" stroke-width="2"/><path d="M3 9H13" stroke="#2a70d0"/></svg>
<span style="position:absolute;left:28px">TI C/C++ Compiler - ...</span></div>
<div class="tb" style="left:427px;width:159px;background:#1e52b7;border:1px solid #18439a">
<svg style="left:9px;top:3px" width="17" height="17"><path d="M8 0L16 3V12L8 16L0 12V3Z" fill="#999"/><path d="M8 0L16 3L8 7L0 3Z" fill="#ddd"/><circle cx="4" cy="7" r="1.400" fill="#444"/><circle cx="11" cy="10" r="1.400" fill="#444"/></svg>
<span style="position:absolute;left:29px">C/C++ - hello.c - Cod...</span></div>

<!-- tray -->
<svg style="left:809px;top:745px" width="14" height="17"><path d="M1 1H13V13H11V16L8 13H1Z" fill="#fffde0" stroke="#000"/><text x="4" y="11" font-family="Liberation Sans" font-size="10" font-weight="bold" fill="#1a2a90">?</text></svg>
<svg style="left:833px;top:743px" width="16" height="20"><path d="M4 3H12V7H8M1 6H8V10H1Z" fill="none" stroke="#fff"/><path d="M4 15H11L7.500 18Z" fill="#fff"/></svg>
<div class="b" style="left:859px;top:738px;width:165px;height:30px;background:linear-gradient(#0e8de0,#17a6ec 3px,#1290e2 20px,#0f7ad0)"></div>
<svg style="left:850px;top:744px" width="19" height="19"><circle cx="9.500" cy="9.500" r="9" fill="#2a74dc" stroke="#a8d4f8"/><path d="M11 5L7 9.500L11 14" fill="none" stroke="#fff" stroke-width="2"/></svg>
<svg style="left:870px;top:745px" width="17" height="16"><path d="M8 0L16 3V12L8 16L0 12V3Z" fill="#999"/><path d="M8 0L16 3L8 7L0 3Z" fill="#ddd"/><circle cx="4" cy="7" r="1.400" fill="#444"/><circle cx="11" cy="10" r="1.400" fill="#444"/></svg>
<svg style="left:889px;top:745px" width="17" height="17"><circle cx="7.500" cy="7.500" r="7" fill="#f5c030" stroke="#806010"/><circle cx="11" cy="11.500" r="4.500" fill="#2ca83a" stroke="#fff"/><path d="M9 11.500L10.500 13L13 10" fill="none" stroke="#fff"/></svg>
<svg style="left:907px;top:745px" width="14" height="17"><path d="M7 0L14 2V9Q13 14 7 17Q1 14 0 9V2Z" fill="#c82030" stroke="#602020"/><path d="M4.500 5L9.500 10M9.500 5L4.500 10" stroke="#fff" stroke-width="1.600"/></svg>
<svg style="left:924px;top:745px" width="16" height="16"><rect x="0.500" y="0.500" width="14" height="14" fill="#2a5ca8" stroke="#123"/><circle cx="7.500" cy="7.500" r="3.500" fill="none" stroke="#8ab8e8" stroke-dasharray="1 1"/></svg>
<svg style="left:942px;top:745px" width="16" height="15"><rect x="0.500" y="3" width="14" height="11" fill="#eee" stroke="#444"/><path d="M3 4V13M6 4V13M9 4V13M12 4V13" stroke="#c03030" stroke-width="1.500" stroke-dasharray="2 1.500"/></svg>
<div class="a" style="left:967px;top:746px;color:#fff;line-height:14px">9:38 AM</div>
</body></html>
